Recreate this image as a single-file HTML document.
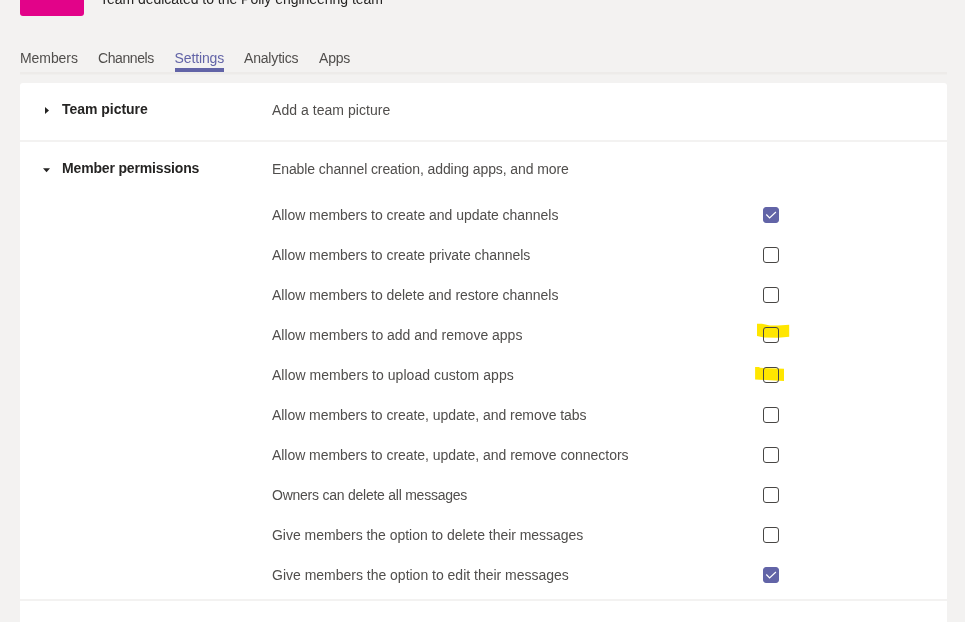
<!DOCTYPE html>
<html><head><meta charset="utf-8">
<style>
html,body{margin:0;padding:0;}
body{width:965px;height:622px;overflow:hidden;background:#f3f2f1;font-family:"Liberation Sans",sans-serif;position:relative;color:#252423;}
.abs{position:absolute;white-space:nowrap;}
#root{position:absolute;left:0;top:0;width:965px;height:622px;overflow:hidden;will-change:transform;}
.avatar{left:20px;top:-20px;width:64px;height:36px;background:#e20389;border-radius:3px;}
.desc{left:100px;top:-9px;font-size:14.0px;color:#252423;}
.tab{top:49px;font-size:14.0px;color:#504e4c;line-height:18px;}
.tab.act{color:#6264a7;}
.uline{left:175px;top:68px;width:49px;height:3.5px;background:#6264a7;}
.sep{left:20px;top:72px;width:927px;height:3px;background:linear-gradient(#edebe9,#edebe9 66%,#f0efed 66%);}
.card{left:20px;top:83px;width:927px;height:560px;background:#fff;border-radius:3px;}
.hr{left:20px;width:927px;height:2px;background:#f3f2f1;}
.h{font-weight:bold;font-size:14.0px;left:62px;color:#252423;line-height:18px;}
.t{font-size:14.0px;left:272px;color:#504e4c;line-height:18px;}
.cb{left:763px;width:14px;height:14px;border:1px solid #484644;border-radius:3px;background:transparent;}
.cb.on{background:#6264a7;border-color:#6264a7;}
</style></head><body><div id="root">
<div class="abs avatar"></div>
<div class="abs desc" style="letter-spacing:-0.025px" id="desc">Team dedicated to the Polly engineering team</div>

<div class="abs tab" style="left:20px;letter-spacing:-0.077px" id="t1">Members</div>
<div class="abs tab" style="left:98px;letter-spacing:-0.422px" id="t2">Channels</div>
<div class="abs tab act" style="left:174.5px;letter-spacing:-0.113px" id="t3">Settings</div>
<div class="abs tab" style="left:244px;letter-spacing:-0.179px" id="t4">Analytics</div>
<div class="abs tab" style="left:319px;letter-spacing:-0.207px" id="t5">Apps</div>
<div class="abs uline"></div>
<div class="abs sep"></div>

<div class="abs card"></div>
<div class="abs hr" style="top:139.5px"></div>
<div class="abs hr" style="top:599px"></div>

<svg class="abs" style="left:44px;top:105.6px" width="6" height="9" viewBox="0 0 6 9"><path d="M1 1 L5 4.5 L1 8 Z" fill="#252423"/></svg>
<svg class="abs" style="left:41.6px;top:166.8px" width="9" height="6" viewBox="0 0 9 6"><path d="M1 1.2 L8 1.2 L4.5 5.2 Z" fill="#252423"/></svg>

<div class="abs h" style="top:100px;letter-spacing:-0.028px" id="h1">Team picture</div>
<div class="abs h" style="top:159px;letter-spacing:-0.157px" id="h2">Member permissions</div>
<div class="abs t" style="top:101px;letter-spacing:0.040px" id="d1">Add a team picture</div>
<div class="abs t" style="top:160px;letter-spacing:-0.098px" id="d2">Enable channel creation, adding apps, and more</div>

<svg class="abs" style="left:750px;top:315px" width="50" height="75" viewBox="0 0 50 75">
<path d="M7 8.7 L12 8.8 L20 10.6 L28 10.6 L39.2 9.8 L39.2 21.7 L28 22.8 L14 22.4 L7 20.9 Z" fill="#ffe600"/>
<path d="M5.1 51.9 L9 51.9 L10 52.8 L34 53.8 L34 66 L20 65.2 L5.1 64.5 Z" fill="#ffe600"/>
</svg>

<div class="abs t" style="top:206px;letter-spacing:-0.037px" id="r1">Allow members to create and update channels</div>
<div class="abs t" style="top:246px;letter-spacing:-0.041px" id="r2">Allow members to create private channels</div>
<div class="abs t" style="top:286px;letter-spacing:-0.036px" id="r3">Allow members to delete and restore channels</div>
<div class="abs t" style="top:326px;letter-spacing:-0.005px" id="r4">Allow members to add and remove apps</div>
<div class="abs t" style="top:366px;letter-spacing:0.037px" id="r5">Allow members to upload custom apps</div>
<div class="abs t" style="top:406px;letter-spacing:-0.045px" id="r6">Allow members to create, update, and remove tabs</div>
<div class="abs t" style="top:446px;letter-spacing:-0.042px" id="r7">Allow members to create, update, and remove connectors</div>
<div class="abs t" style="top:486px;letter-spacing:-0.242px" id="r8">Owners can delete all messages</div>
<div class="abs t" style="top:526px;letter-spacing:-0.033px" id="r9">Give members the option to delete their messages</div>
<div class="abs t" style="top:566px;letter-spacing:-0.010px" id="r10">Give members the option to edit their messages</div>

<div class="abs cb on" style="top:207px"></div>
<svg class="abs" style="left:763px;top:207px" width="16" height="16" viewBox="0 0 16 16"><path d="M3.3 7.5 L6.6 11 L12.9 5" fill="none" stroke="#fff" stroke-width="1.15"/></svg>
<div class="abs cb" style="top:247px"></div>
<div class="abs cb" style="top:287px"></div>
<div class="abs cb" style="top:327px"></div>
<div class="abs cb" style="top:367px"></div>
<div class="abs cb" style="top:407px"></div>
<div class="abs cb" style="top:447px"></div>
<div class="abs cb" style="top:487px"></div>
<div class="abs cb" style="top:527px"></div>
<div class="abs cb on" style="top:567px"></div>
<svg class="abs" style="left:763px;top:567px" width="16" height="16" viewBox="0 0 16 16"><path d="M3.3 7.5 L6.6 11 L12.9 5" fill="none" stroke="#fff" stroke-width="1.15"/></svg>
</div></body></html>
